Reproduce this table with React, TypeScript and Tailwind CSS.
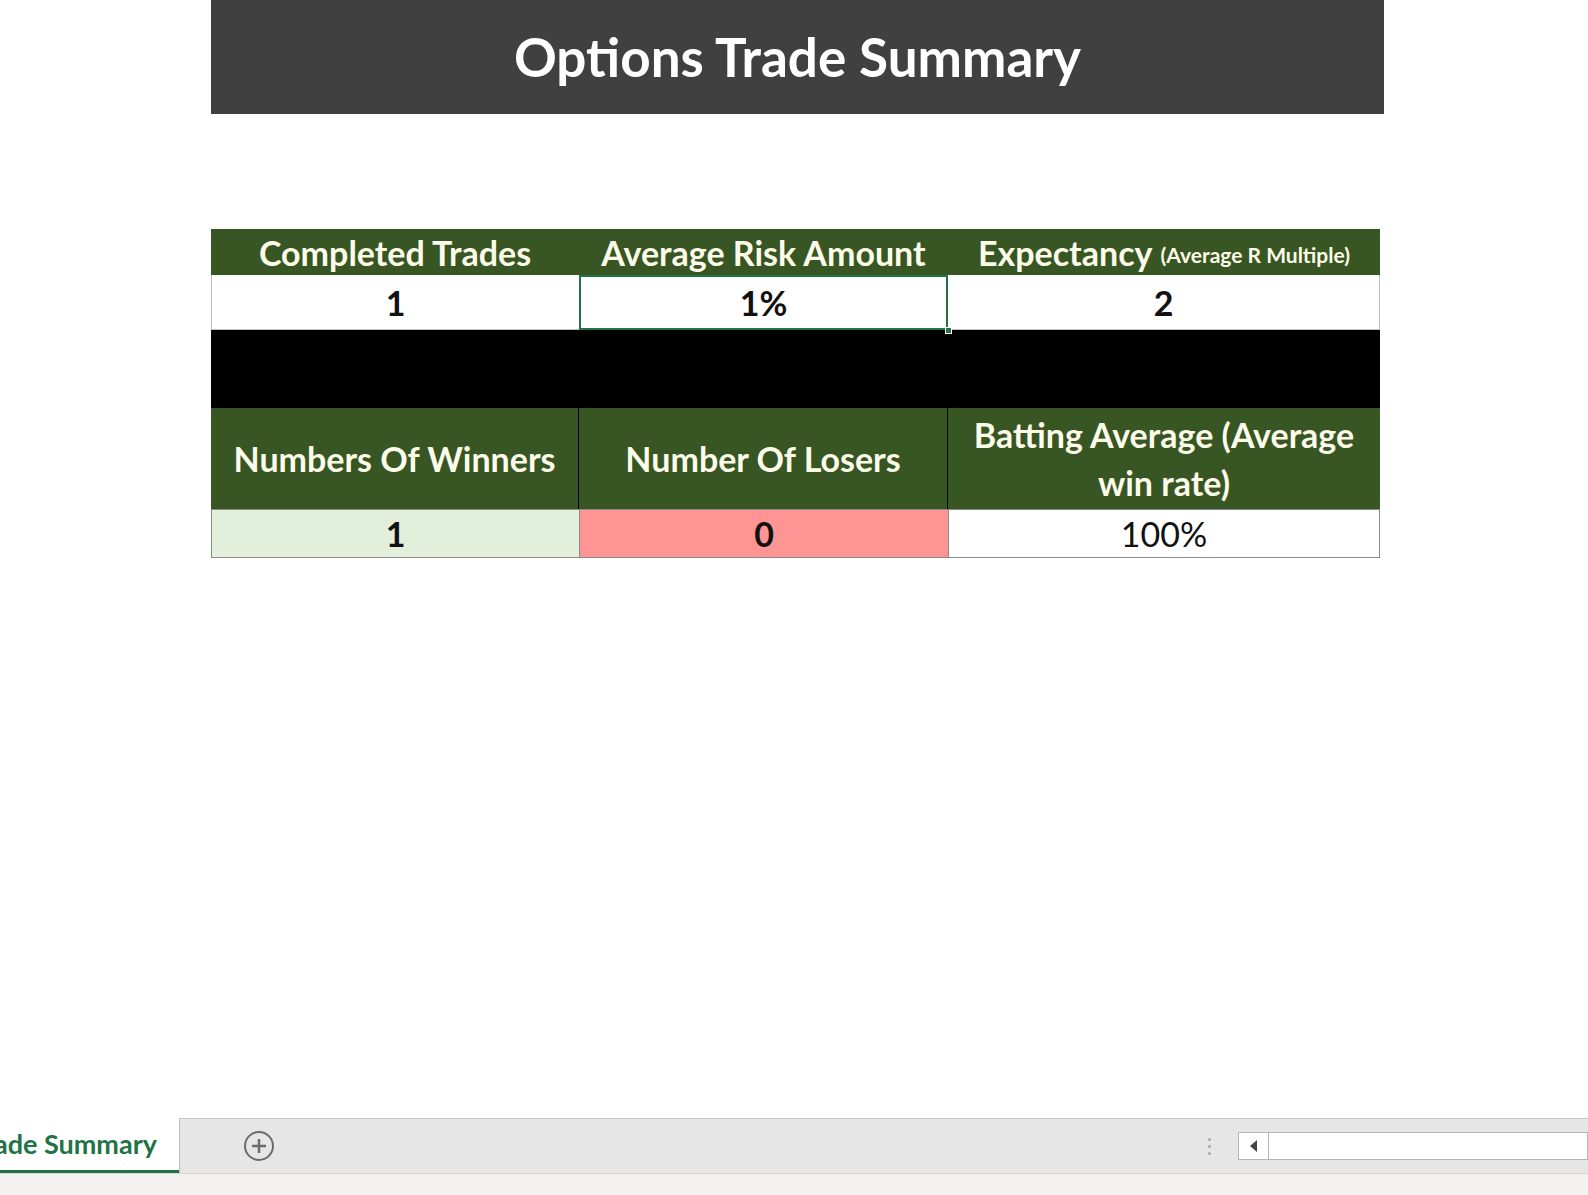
import React from 'react';

const font = { fontFamily: 'Lato, "Open Sans", sans-serif' };

function HeadCell({ children, className = '' }: { children: React.ReactNode; className?: string }) {
  return (
    <div className={`flex items-center justify-center text-center font-bold text-[#fdfbe9] bg-[#375623] ${className}`}>
      {children}
    </div>
  );
}

function ValueCell({ children, className = '' }: { children: React.ReactNode; className?: string }) {
  return <div className={`flex items-center justify-center text-[34px] text-[#111] ${className}`}>{children}</div>;
}

export default function App() {
  return (
    <div className="flex flex-col h-[1195px] w-[1588px] bg-white overflow-hidden" style={font}>
      <div className="flex-1 pl-[211px]">
        <div className="w-[1173px] h-[114px] bg-[#404040] flex items-center justify-center">
          <h1 className="text-[53px] font-bold text-white">Options Trade Summary</h1>
        </div>

        <div className="mt-[115px] w-[1169px] grid grid-cols-[368px_369px_432px]">
          <HeadCell className="h-[46px] text-[34px]">Completed Trades</HeadCell>
          <HeadCell className="h-[46px] text-[34px]">Average Risk Amount</HeadCell>
          <HeadCell className="h-[46px] text-[34px] gap-2 whitespace-nowrap">
            Expectancy <span className="text-[21px] mt-[6px]">(Average R Multiple)</span>
          </HeadCell>

          <ValueCell className="h-[55px] font-bold border border-t-0 border-r-0 border-[#bfbfbf]">1</ValueCell>
          <div className="relative">
            <ValueCell className="h-[55px] font-bold border-2 border-[#217346]">1%</ValueCell>
            <div className="absolute -right-[4px] -bottom-[4px] w-[7px] h-[7px] bg-[#217346] border border-white" />
          </div>
          <ValueCell className="h-[55px] font-bold border border-t-0 border-l-0 border-[#bfbfbf]">2</ValueCell>

          <div className="col-span-3 h-[78px] bg-black" />

          <HeadCell className="h-[101px] text-[34px] border-r border-black">Numbers Of Winners</HeadCell>
          <HeadCell className="h-[101px] text-[34px] border-r border-black">Number Of Losers</HeadCell>
          <HeadCell className="h-[101px] text-[34px] leading-[48px] px-4">Batting Average (Average win rate)</HeadCell>

          <ValueCell className="h-[49px] font-bold bg-[#e2efda] border border-r-0 border-[#8a8a8a]">1</ValueCell>
          <ValueCell className="h-[49px] font-bold bg-[#ff9494] border border-r-0 border-[#8a8a8a]">0</ValueCell>
          <ValueCell className="h-[49px] bg-white border border-[#8a8a8a] text-[33px]">100%</ValueCell>
        </div>
      </div>

      <div className="h-[55px] flex items-stretch bg-[#e6e6e6] border-t border-[#c6c6c6] relative">
        <div className="w-[179px] -mt-px bg-white flex items-center justify-end pr-[22px] overflow-hidden border-b-[3px] border-[#217346] text-[27px] font-bold text-[#217346]">
          <span className="whitespace-nowrap">ade Summary</span>
        </div>
        <div className="w-px bg-[#bdbdbd]" />
        <div className="flex items-center pl-[63px]">
          <svg width="32" height="32" viewBox="0 0 32 32" fill="none" stroke="#6b6b6b" strokeWidth="2">
            <circle cx="16" cy="16" r="14" />
            <path d="M16 9v14M9 16h14" strokeWidth="2.5" />
          </svg>
        </div>
        <div className="flex-1" />
        <div className="flex flex-col justify-center gap-[4px] mr-[27px]">
          <span className="w-[3px] h-[3px] rounded-full bg-[#a8a8a8]" />
          <span className="w-[3px] h-[3px] rounded-full bg-[#a8a8a8]" />
          <span className="w-[3px] h-[3px] rounded-full bg-[#a8a8a8]" />
        </div>
        <div className="flex items-center">
          <div className="w-[350px] h-[28px] flex border border-[#b5b5b5] bg-white">
            <div className="w-[30px] flex items-center justify-center border-r border-[#b5b5b5]">
              <span className="w-0 h-0 border-y-[6px] border-y-transparent border-r-[7px] border-r-[#444]" />
            </div>
            <div className="flex-1" />
          </div>
        </div>
      </div>
      <div className="h-[22px] bg-[#f3f2f1] border-t border-[#d4d4d4]" />
    </div>
  );
}
